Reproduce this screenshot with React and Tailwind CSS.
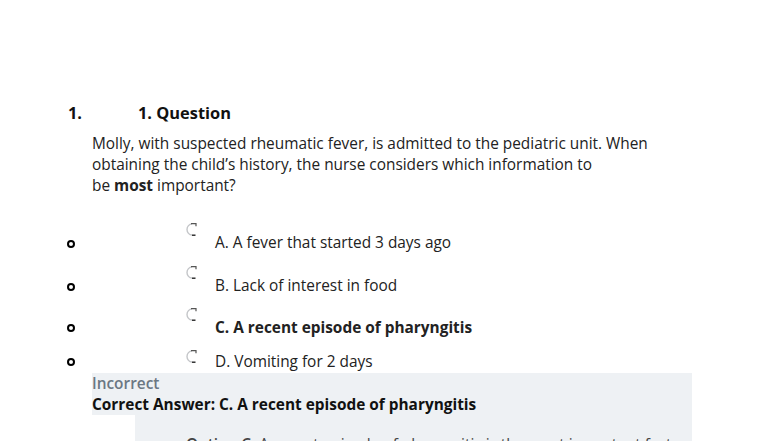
import React from "react";

function Radio() {
  return (
    <svg width="12" height="15" viewBox="0 0 12 15" className="block">
      <path d="M6 2 A5 5.5 0 0 0 6 13" fill="none" stroke="#c4c6c9" strokeWidth="1.4" />
      <path d="M5 1.6 L10 1.6 L10 4.2" fill="none" stroke="#555" strokeWidth="1.2" />
      <path d="M6 13.2 L9.5 13.2" stroke="#222" strokeWidth="1.4" />
    </svg>
  );
}

function Option({ label, bold, h, rt, tt, bt }) {
  return (
    <div className={`flex items-start ${h}`}>
      <div className={`w-[186px] pl-[67px] ${bt}`}>
        <div className="w-[8px] h-[8px] rounded-full border-[2.2px] border-[#000]" />
      </div>
      <div className={`w-[29px] ${rt}`}>
        <Radio />
      </div>
      <div className={`text-[15.4px] leading-[20px] text-[#222] ${tt} ${bold ? "font-bold" : ""}`}>{label}</div>
    </div>
  );
}

export default function App() {
  return (
    <div className="w-[784px] h-[441px] overflow-hidden bg-white" style={{ fontFamily: '"Open Sans", "Noto Sans", sans-serif' }}>
      <div className="pt-[101px]">
        <div className="flex items-center text-[16.4px] font-bold text-[#111] leading-[24px]">
          <span className="ml-[68px] w-[70px]">1.</span>
          <span>1. Question</span>
        </div>
        <div className="ml-[92px] mt-[8px] w-[580px] text-[15.4px] leading-[21px] text-[#222]">
          Molly, with suspected rheumatic fever, is admitted to the pediatric unit. When obtaining the child’s history, the nurse considers which information to
          <br />
          be <b>most</b> important?
        </div>
        <div className="mt-[25px]">
          <Option label="A. A fever that started 3 days ago" h="h-[43px]" rt="pt-[1px]" tt="pt-[12px]" bt="pt-[19px]" />
          <Option label="B. Lack of interest in food" h="h-[42px]" rt="pt-[1px]" tt="pt-[12px]" bt="pt-[19px]" />
          <Option label="C. A recent episode of pharyngitis" bold h="h-[43px]" rt="pt-[1px]" tt="pt-[12px]" bt="pt-[18px]" />
          <Option label="D. Vomiting for 2 days" h="h-[24px]" rt="pt-[0px]" tt="pt-[3px]" bt="pt-[9px]" />
        </div>
        <div className="ml-[92px] w-[600px] bg-[#eef1f4] pb-[0px]">
          <div className="text-[15.4px] leading-[21px] font-semibold text-[#6b7783]">Incorrect</div>
          <div className="text-[15.4px] leading-[21px] font-bold text-[#111]">Correct Answer: C. A recent episode of pharyngitis</div>
        </div>
        <div className="ml-[135px] w-[557px] h-[60px] bg-[#eef1f4] pt-[19px] pl-[51px]">
          <div className="text-[15.4px] leading-[21px] text-[#444] whitespace-nowrap">
            <span className="font-semibold">Option C:</span> A recent episode of pharyngitis is the most important fact
          </div>
        </div>
      </div>
    </div>
  );
}
